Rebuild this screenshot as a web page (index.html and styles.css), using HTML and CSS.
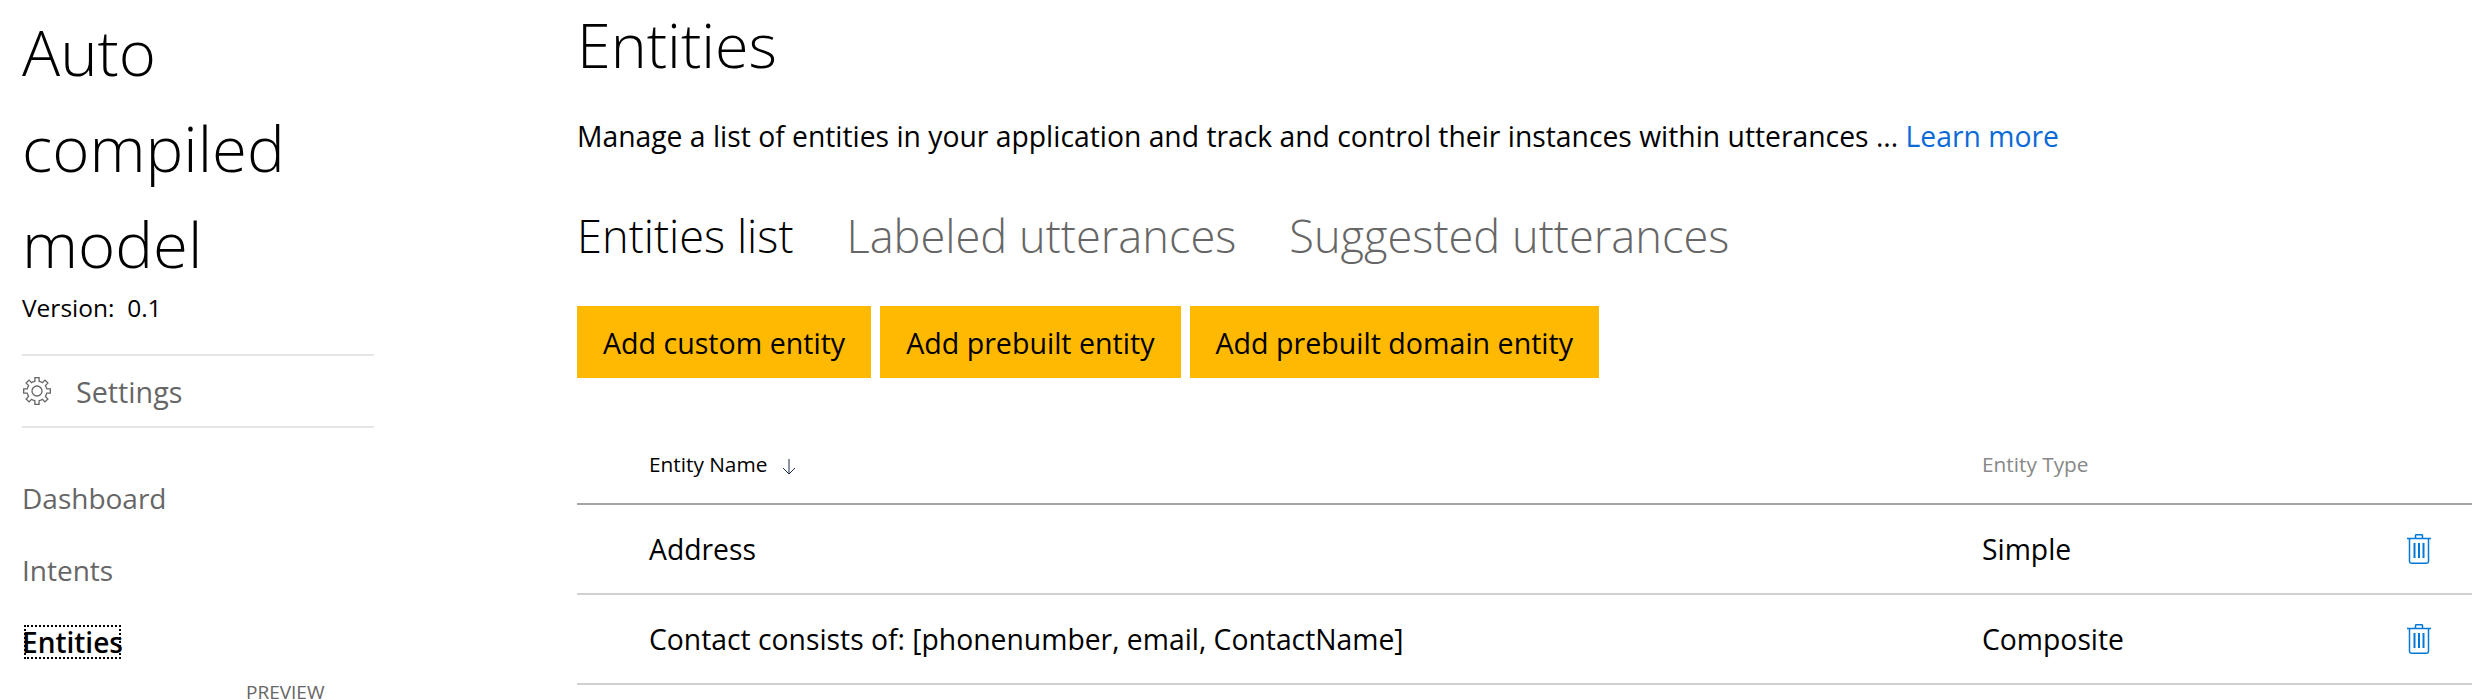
FILE: index.html
```html
<!DOCTYPE html>
<html>
  <head>
    <title>Entities</title>
    <link rel="stylesheet" href="styles.css">
  </head>
  <body>
    <div class="sidebar">
      <h2 class="app-title">Auto compiled model</h2>
      <div class="version">Version:&nbsp; 0.1</div>
      <div class="settings">
        <svg class="gear" viewBox="-15 -15 30 30" width="30" height="30">
          <defs>
            <polyline id="tooth" points="-3.83,-9.24 -2.08,-9.78 -2.11,-13.33 2.11,-13.33 2.08,-9.78 3.83,-9.24"></polyline>
          </defs>
          <g fill="none" stroke="#666" stroke-width="1.3">
            <use href="#tooth"></use>
            <use href="#tooth" transform="rotate(45)"></use>
            <use href="#tooth" transform="rotate(90)"></use>
            <use href="#tooth" transform="rotate(135)"></use>
            <use href="#tooth" transform="rotate(180)"></use>
            <use href="#tooth" transform="rotate(225)"></use>
            <use href="#tooth" transform="rotate(270)"></use>
            <use href="#tooth" transform="rotate(315)"></use>
            <circle r="5"></circle>
          </g>
        </svg>
        <span>Settings</span>
      </div>
      <nav class="nav">
        <a href="#">Dashboard</a>
        <a href="#">Intents</a>
        <a href="#" class="active"><span>Entities</span></a>
      </nav>
      <div class="preview">PREVIEW</div>
    </div>

    <div class="main">
      <h1>Entities</h1>
      <p class="intro">
        Manage a list of entities in your application and track and control their instances within utterances ...
        <a href="#">Learn more</a>
      </p>
      <div class="tabs">
        <span class="tab selected">Entities list</span>
        <span class="tab">Labeled utterances</span>
        <span class="tab">Suggested utterances</span>
      </div>
      <div class="actions">
        <button>Add custom entity</button>
        <button>Add prebuilt entity</button>
        <button>Add prebuilt domain entity</button>
      </div>

      <div class="row head">
        <div class="name">
          Entity Name
          <svg class="sort" viewBox="0 0 16 18" width="16" height="18">
            <path d="M8 1V16M2 10L8 16L14 10" fill="none" stroke="#1a2a44" stroke-width="1"></path>
          </svg>
        </div>
        <div class="type">Entity Type</div>
      </div>
      <div class="row">
        <div class="name">Address</div>
        <div class="type">Simple</div>
        <svg class="trash" viewBox="0 0 24 30" width="24" height="30">
          <path d="M8.500 4V1.500A.8.8 0 0 1 9.300.800H14.700A.8.8 0 0 1 15.500 1.500V4M0 4.500H24M2.500 4.500V27.500A1.800 1.800 0 0 0 4.300 29.200H19.700A1.800 1.800 0 0 0 21.500 27.500V4.500" fill="none" stroke="#0078d7" stroke-width="1.500"></path>
          <path d="M7.500 9V24M12 9V24M16.500 9V24" fill="none" stroke="#0078d7" stroke-width="2"></path>
        </svg>
      </div>
      <div class="row">
        <div class="name">Contact consists of: [phonenumber, email, ContactName]</div>
        <div class="type">Composite</div>
        <svg class="trash" viewBox="0 0 24 30" width="24" height="30">
          <path d="M8.500 4V1.500A.8.8 0 0 1 9.300.800H14.700A.8.8 0 0 1 15.500 1.500V4M0 4.500H24M2.500 4.500V27.500A1.800 1.800 0 0 0 4.300 29.200H19.700A1.800 1.800 0 0 0 21.500 27.500V4.500" fill="none" stroke="#0078d7" stroke-width="1.500"></path>
          <path d="M7.500 9V24M12 9V24M16.500 9V24" fill="none" stroke="#0078d7" stroke-width="2"></path>
        </svg>
      </div>
    </div>
  </body>
</html>
```

FILE: styles.css
```css
html {
  overflow: hidden;
}
body {
  font-family: "Open Sans", "Liberation Sans", sans-serif;
  color: #000;
  background: white;
  margin: 0;
  height: 700px;
  display: flex;
  overflow: hidden;
}
.sidebar {
  width: 577px;
  flex-shrink: 0;
  padding: 4px 0 0 22px;
  box-sizing: border-box;
}
.app-title {
  font-size: 63.5px;
  font-weight: 300;
  line-height: 96px;
  margin: 0;
  width: 330px;
}
.version {
  font-size: 24.5px;
  line-height: 32px;
}
.settings {
  width: 352px;
  height: 70px;
  margin-top: 30px;
  border-top: 2px solid #e6e6e6;
  border-bottom: 2px solid #e6e6e6;
  display: flex;
  align-items: center;
  font-size: 28.7px;
  color: #666;
}
.gear {
  margin-right: 24px;
}
.nav {
  margin-top: 46px;
}
.nav a {
  display: block;
  height: 72px;
  line-height: 48px;
  font-size: 28px;
  color: #666;
  text-decoration: none;
}
.nav a.active {
  color: #000;
  font-weight: 600;
}
.nav a.active span {
  outline: 2px dotted #000;
  outline-offset: -4px;
}
.preview {
  font-size: 19px;
  color: #666;
  margin: -11px 0 0 224px;
}
.main {
  flex: 1;
  min-width: 0;
}
h1 {
  font-size: 61px;
  font-weight: 300;
  line-height: 84px;
  margin: 3px 0 0;
}
.intro {
  font-size: 28.3px;
  line-height: 40px;
  margin: 29px 0 0;
}
.intro a {
  color: #0b6ad6;
  text-decoration: none;
}
.tabs {
  display: flex;
  gap: 53px;
  margin-top: 48px;
  font-size: 45.2px;
  font-weight: 300;
  line-height: 64px;
  color: #666;
}
.tab.selected {
  color: #000;
}
.actions {
  display: flex;
  gap: 9px;
  margin-top: 38px;
}
button {
  background-color: #ffb900;
  color: #000;
  border: none;
  height: 72px;
  padding: 0 26px;
  font-family: inherit;
  font-size: 28.6px;
}
.row {
  display: flex;
  align-items: center;
  height: 88px;
  padding-left: 72px;
  border-bottom: 2px solid #d0d0d0;
  font-size: 28.3px;
}
.row.head {
  height: 78px;
  margin-top: 47px;
  border-bottom-color: #a6a6a6;
  font-size: 20.8px;
}
.row .name {
  width: 1333px;
}
.head .type {
  color: #888;
}
.sort {
  vertical-align: -4px;
  margin-left: 8px;
}
.trash {
  margin-left: auto;
  margin-right: 41px;
}
```
